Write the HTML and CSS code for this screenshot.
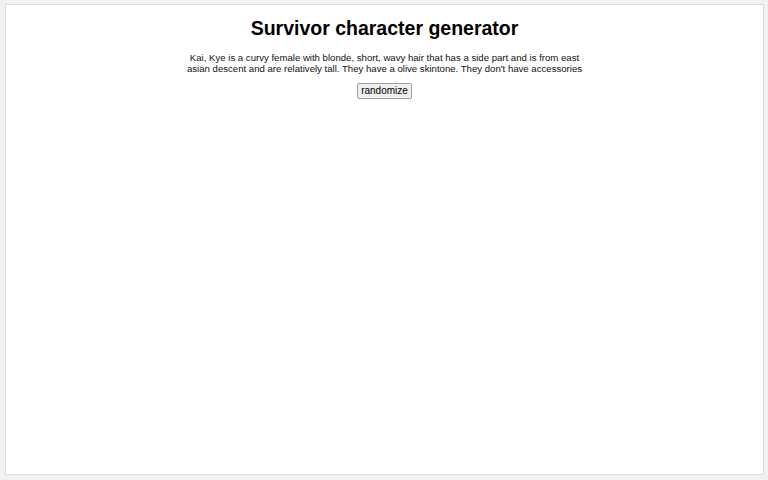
FILE: index.html
```html
<!DOCTYPE html>
<html lang="en">
<head>
    <meta charset="UTF-8">
    <meta name="viewport" content="width=device-width, initial-scale=1.0">
    <title>Survivor character generator</title>
    <link rel="stylesheet" href="styles.css">
</head>
<body>
    <div class="panel">
        <h1>Survivor character generator</h1>
        <p class="description">Kai, Kye is a curvy female with blonde, short, wavy hair that has a side part and is from east asian descent and are relatively tall. They have a olive skintone. They don't have accessories</p>
        <button class="randomize">randomize</button>
    </div>
</body>
</html>
```

FILE: styles.css
```css
body {
    margin: 0;
    padding: 4px 4px 4px 5px;
    background: #f2f2f2;
    font-family: 'Liberation Sans', Arial, sans-serif;
    color: #000;
}

.panel {
    background: white;
    border: 1px solid #dcdcdc;
    height: 469px;
    text-align: center;
}

h1 {
    font-size: 19.5px;
    margin: 12px 0 12px;
}

.description {
    font-size: 9.6px;
    line-height: 11px;
    max-width: 402px;
    margin: 0 auto 6px;
    color: #111;
}

.randomize {
    font-family: 'Liberation Sans', Arial, sans-serif;
    font-size: 10px;
    line-height: 12px;
    padding: 1px 3px;
    background: #f0f0f0;
    border: 1px solid #a0a0a0;
    border-radius: 2px;
    color: #000;
}
```
